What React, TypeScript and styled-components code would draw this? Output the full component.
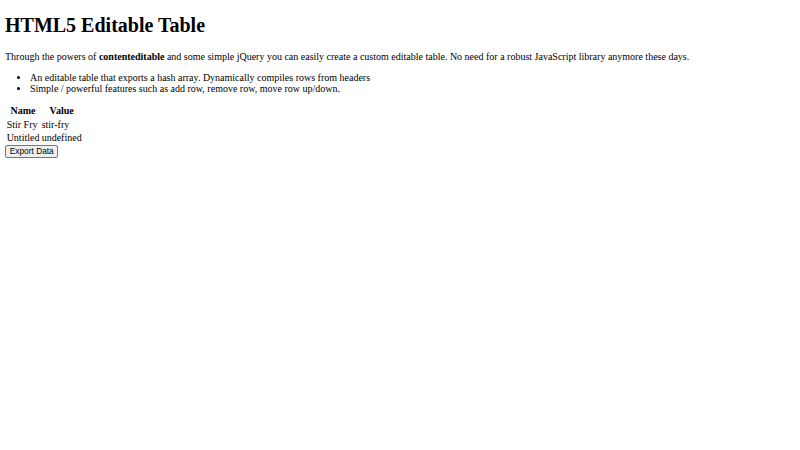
import React from "react";
import styled, { createGlobalStyle } from "styled-components";

const Global = createGlobalStyle`
  body {
    margin: 5px;
    font-family: "Liberation Serif", "Times New Roman", serif;
    font-size: 10px;
    color: #000;
    background: #fff;
  }
`;

const Title = styled.h1`
  font-size: 20px;
  font-weight: bold;
  margin: 9.4px 0 13.4px;
`;

const Para = styled.p`
  margin: 10px 0;
`;

const List = styled.ul`
  margin: 10px 0;
  padding-left: 25px;
  list-style: disc;
`;

const Table = styled.table`
  border-collapse: separate;
  border-spacing: 1.25px;
`;

const Head = styled.th`
  padding: 0.625px;
  font-weight: bold;
  text-align: center;
`;

const Cell = styled.td`
  padding: 0.625px;
  outline: none;
`;

const Button = styled.button`
  font-family: "Liberation Sans", Arial, sans-serif;
  font-size: 8.333px;
  padding: 0.6px 3.75px;
  border: 1px solid #767676;
  border-radius: 2px;
  background: #efefef;
  color: #000;
`;

const rows = [
  { name: "Stir Fry", value: "stir-fry" },
  { name: "Untitled", value: "undefined" },
];

export default function App() {
  return (
    <>
      <Global />
      <Title>HTML5 Editable Table</Title>
      <Para>
        Through the powers of <strong>contenteditable</strong> and some simple jQuery you can easily
        create a custom editable table. No need for a robust JavaScript library anymore these days.
      </Para>
      <List>
        <li>An editable table that exports a hash array. Dynamically compiles rows from headers</li>
        <li>Simple / powerful features such as add row, remove row, move row up/down.</li>
      </List>
      <Table>
        <thead>
          <tr>
            <Head>Name</Head>
            <Head>Value</Head>
          </tr>
        </thead>
        <tbody>
          {rows.map((r) => (
            <tr key={r.name}>
              <Cell contentEditable suppressContentEditableWarning>{r.name}</Cell>
              <Cell contentEditable suppressContentEditableWarning>{r.value}</Cell>
            </tr>
          ))}
        </tbody>
      </Table>
      <Button>Export Data</Button>
    </>
  );
}
